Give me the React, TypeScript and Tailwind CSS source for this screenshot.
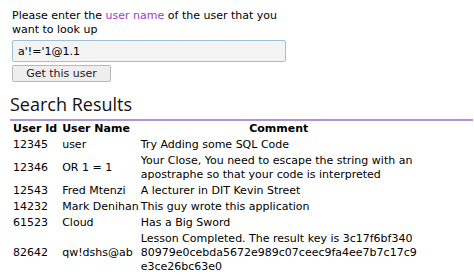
export default function App() {
  const rows: [string, string, string[]][] = [
    ['12345', 'user', ['Try Adding some SQL Code']],
    ['12346', 'OR 1 = 1', ['Your Close, You need to escape the string with an', 'apostraphe so that your code is interpreted']],
    ['12543', 'Fred Mtenzi', ['A lecturer in DIT Kevin Street']],
    ['14232', 'Mark Denihan', ['This guy wrote this application']],
    ['61523', 'Cloud', ['Has a Big Sword']],
    ['82642', 'qw!dshs@ab', ['Lesson Completed. The result key is 3c17f6bf340', '80979e0cebda5672e989c07ceec9fa4ee7b7c17c9', 'e3ce26bc63e0']],
  ];

  return (
    <div className="w-[474px] h-[276px] overflow-hidden bg-white text-[11px] leading-[14px] text-black font-['DejaVu_Sans',sans-serif]">
      <div className="pl-[12px] pt-[9px]">
        <p className="w-[280px]">
          Please enter the <span className="text-[#9b3ec4]">user name</span> of the user that you want to look up
        </p>
        <input
          readOnly
          value="a'!='1@1.1"
          className="mt-[3px] block w-[274px] h-[22px] px-[5px] bg-[#f3f3f3] border border-[#9fbfd6] rounded-[2px] text-[11px] font-['DejaVu_Sans',sans-serif] outline-none"
        />
        <button className="mt-[3px] block w-[99px] h-[17px] bg-[#eeeeee] border border-[#b8b8b8] rounded-[2px] text-[11px] leading-[14px] text-[#222]">
          Get this user
        </button>
      </div>
      <h2 className="mt-[11px] ml-[10px] mr-[1px] pb-[4px] border-b-2 border-[#b193dc] text-[18px] leading-[22px] font-['Open_Sans',sans-serif] text-[#111]">
        Search Results
      </h2>
      <table className="ml-[10px] -mt-[1px] border-separate border-spacing-[2px]">
        <thead>
          <tr className="font-bold">
            <th className="px-[1px] py-0 text-left">User Id</th>
            <th className="pl-[2px] pr-0 py-0 text-left">User Name</th>
            <th className="px-0 py-0 text-center w-[270px]">Comment</th>
          </tr>
        </thead>
        <tbody>
          {rows.map(([id, name, comment]) => (
            <tr key={id}>
              <td className="px-[1px] py-0 align-middle">{id}</td>
              <td className="pl-[2px] pr-0 py-0 align-middle whitespace-nowrap">{name}</td>
              <td className="px-0 py-0 align-middle whitespace-nowrap">
                {comment.map((line) => (
                  <div key={line}>{line}</div>
                ))}
              </td>
            </tr>
          ))}
        </tbody>
      </table>
    </div>
  );
}
